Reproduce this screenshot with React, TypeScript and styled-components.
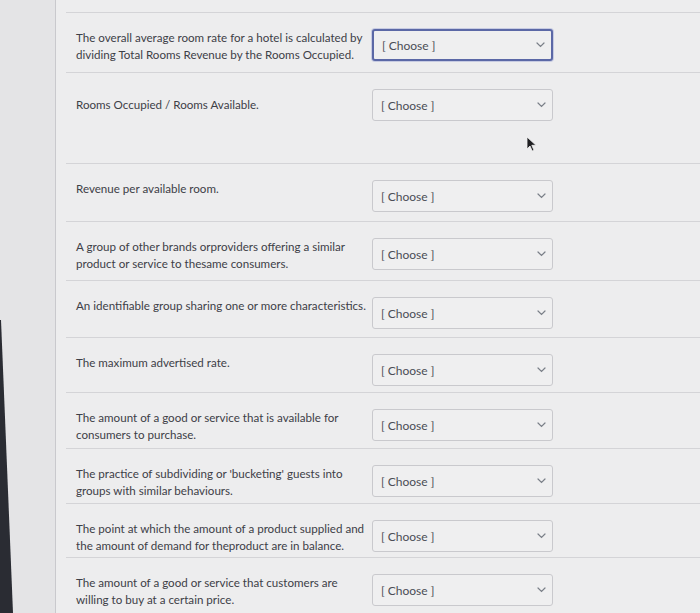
import React from 'react'
import styled, { createGlobalStyle } from 'styled-components'

const GlobalStyle = createGlobalStyle`
  html, body {
    margin: 0;
    padding: 0;
    background: #e3e3e5;
  }
  body {
    font-family: Lato, 'Noto Sans', sans-serif;
  }
`

const questions = [
  { id: '1', text: 'The overall average room rate for a hotel is calculated by dividing Total Rooms Revenue by the Rooms Occupied.', height: 60, focused: true },
  { id: '2', text: 'Rooms Occupied / Rooms Available.', height: 91, centered: true },
  { id: '3', text: 'Revenue per available room.', height: 58 },
  { id: '4', text: 'A group of other brands orproviders offering a similar product or service to thesame consumers.', height: 59 },
  { id: '5', text: 'An identifiable group sharing one or more characteristics.', height: 57 },
  { id: '6', text: 'The maximum advertised rate.', height: 55 },
  { id: '7', text: 'The amount of a good or service that is available for consumers to purchase.', height: 56 },
  { id: '8', text: "The practice of subdividing or 'bucketing' guests into groups with similar behaviours.", height: 55 },
  { id: '9', text: 'The point at which the amount of a product supplied and the amount of demand for theproduct are in balance.', height: 54 },
  { id: '10', text: 'The amount of a good or service that customers are willing to buy at a certain price.', height: 56 },
]

const Chevron = () => (
  <svg width='9' height='6' viewBox='0 0 9 6' fill='none'>
    <path d='M1 1l3.5 3.5L8 1' stroke='#7a7f88' strokeWidth='1.2' strokeLinecap='round' />
  </svg>
)

const Pointer = () => (
  <svg width='12' height='16' viewBox='0 0 12 16'>
    <path d='M1 1v12l3-3 2.2 5 1.8-.8-2.2-4.9H10z' fill='#1f1f22' stroke='#f2f2f2' strokeWidth='0.8' />
  </svg>
)

const App: React.FC = () => {
  return (
    <>
      <GlobalStyle />
      <StyledPage>
        <Panel>
          <Rows>
            {questions.map((q) => (
              <Row key={q.id} $height={q.height}>
                <Label $centered={!!q.centered}>{q.text}</Label>
                <Select $focused={!!q.focused}>
                  <span>[ Choose ]</span>
                  <Chevron />
                </Select>
              </Row>
            ))}
            <EndLine />
          </Rows>
        </Panel>
        <Cursor>
          <Pointer />
        </Cursor>
        <Bezel />
      </StyledPage>
    </>
  )
}

export default App

const StyledPage = styled.div`
  position: relative;
  width: 700px;
  height: 613px;
  overflow: hidden;
  padding-left: 55px;
  box-sizing: border-box;
  background: #e4e4e6;
`

const Panel = styled.div`
  height: 100%;
  background: #ededee;
  border-left: 1px solid #c9c9cd;
  padding-top: 12px;
  padding-left: 10px;
  box-sizing: border-box;
`

const Rows = styled.div`
  display: flex;
  flex-direction: column;
`

const Row = styled.div<{ $height: number }>`
  display: flex;
  align-items: flex-start;
  height: ${(p) => p.$height}px;
  box-sizing: border-box;
  padding: 16px 0 0 10px;
  border-top: 1px solid #d4d4d7;
`

const EndLine = styled.div`
  border-top: 1px solid #d4d4d7;
`

const Label = styled.div<{ $centered: boolean }>`
  width: 296px;
  flex: none;
  padding-top: ${(p) => (p.$centered ? '7px' : '0')};
  font-size: 11.6px;
  line-height: 17px;
  color: #3d4047;
`

const Select = styled.div<{ $focused: boolean }>`
  width: 181px;
  height: 32px;
  flex: none;
  display: flex;
  align-items: center;
  justify-content: space-between;
  box-sizing: border-box;
  padding: 0 6px 0 8px;
  background: #efeff0;
  border: ${(p) => (p.$focused ? '2px solid #5b68a6' : '1px solid #c9c9cd')};
  border-radius: 3px;
  box-shadow: ${(p) => (p.$focused ? '0 0 0 1px #c7cbe2' : 'none')};
  font-size: 12px;
  color: #4a4d55;
`

const Cursor = styled.div`
  position: absolute;
  left: 526px;
  top: 136px;
  line-height: 0;
`

const Bezel = styled.div`
  position: absolute;
  left: 0;
  top: 0;
  width: 14px;
  height: 613px;
  background: #2a2c33;
  clip-path: polygon(0 320px, 1px 320px, 13px 613px, 0 613px);
`
